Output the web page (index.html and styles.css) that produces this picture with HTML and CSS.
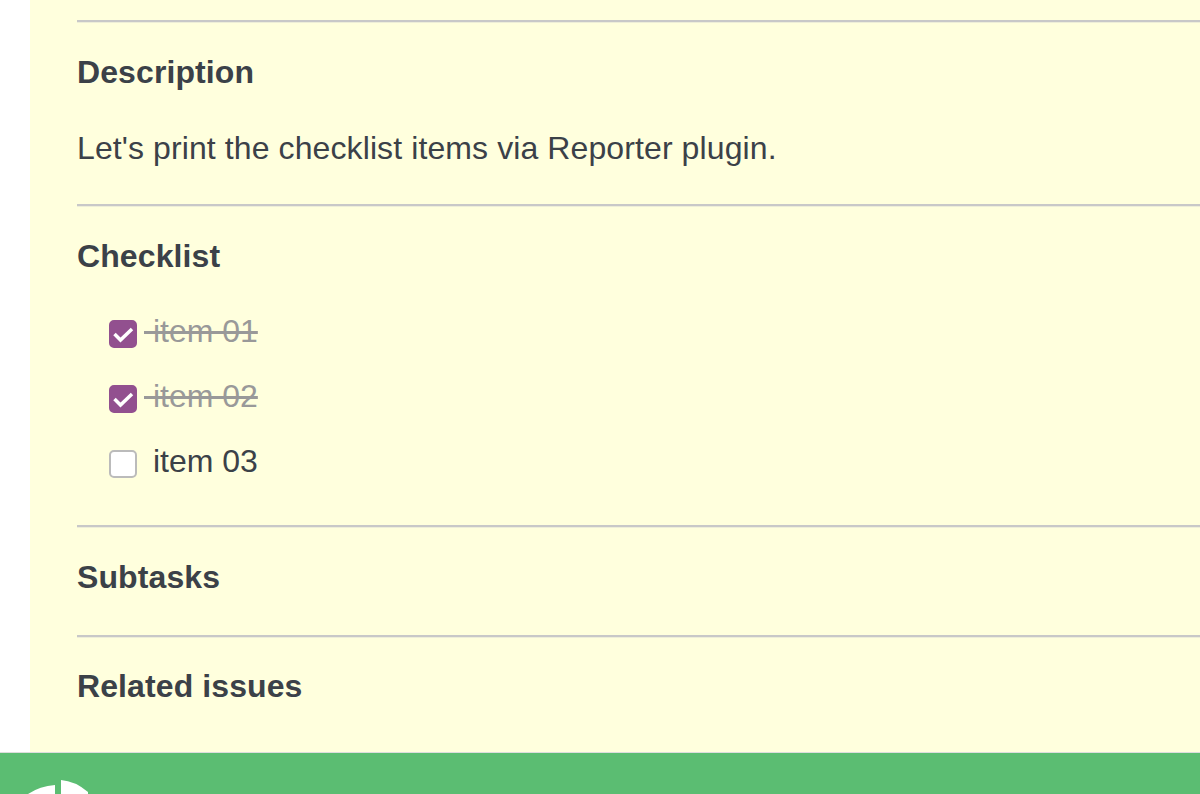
FILE: index.html
```html
<!DOCTYPE html>
<html>
  <head>
    <title>Issue</title>
    <link rel="stylesheet" href="styles.css">
  </head>

  <body>
    <div class="issue">
      <hr>
      <div class="section description">
        <h3>Description</h3>
        <p>Let's print the checklist items via Reporter plugin.</p>
      </div>
      <hr>
      <div class="section checklist-section">
        <h3>Checklist</h3>
        <ul class="checklist">
          <li class="done">
            <span class="box">
              <svg viewBox="0 0 28 28"><path d="M5.5 14l6 6 11.500-11"/></svg>
            </span>
            <span class="label"> item 01</span>
          </li>
          <li class="done">
            <span class="box">
              <svg viewBox="0 0 28 28"><path d="M5.5 14l6 6 11.500-11"/></svg>
            </span>
            <span class="label"> item 02</span>
          </li>
          <li>
            <span class="box"></span>
            <span class="label"> item 03</span>
          </li>
        </ul>
      </div>
      <hr>
      <div class="section subtasks">
        <h3>Subtasks</h3>
      </div>
      <hr class="thin">
      <div class="section relations">
        <h3>Related issues</h3>
      </div>
    </div>

    <div class="footer">
      <svg class="logo" viewBox="0 0 80 16">
        <path d="M8 16Q20 8 35 7V16Z"/>
        <path d="M41 2Q55 3 68 14V16H41Z"/>
      </svg>
    </div>
  </body>
</html>
```

FILE: styles.css
```css
* {
  margin: 0;
  padding: 0;
  box-sizing: border-box;
  font-family: "Liberation Sans", Arial, sans-serif;
}

html, body {
  height: 794px;
  overflow: hidden;
  background: #fff;
}

.issue {
  height: 752px;
  margin-left: 30px;
  padding: 20px 0 0 47px;
  background: #ffd;
  color: #3b4148;
  overflow: hidden;
}

hr {
  height: 2px;
  border: none;
  background: #c8c8c8;
  box-shadow: 0 1px 0 #eeeed8;
}

hr.thin {
  height: 1.5px;
}

h3 {
  font-size: 32px;
  line-height: 40px;
  font-weight: bold;
  letter-spacing: 0.1px;
}

.description {
  padding-top: 30px;
  height: 182px;
}

.description p {
  margin-top: 36px;
  font-size: 32px;
  line-height: 40px;
  letter-spacing: 0.1px;
}

.checklist-section {
  padding-top: 30px;
  height: 319px;
}

.checklist {
  list-style: none;
  margin-top: 23px;
  padding-left: 32px;
}

.checklist li {
  display: flex;
  align-items: center;
  height: 65px;
  font-size: 32px;
}

.box {
  width: 28px;
  height: 28px;
  margin-top: 4px;
  margin-right: 7px;
  background: #fff;
  border: 2px solid #bbb;
  border-radius: 5px;
}

.box svg {
  display: block;
  width: 28px;
  height: 28px;
  margin: -2px;
  fill: none;
  stroke: #fff;
  stroke-width: 3.5;
}

.label {
  white-space: pre;
}

.done .box {
  background: #92508f;
  border-color: #92508f;
}

.done .label {
  color: #999;
  text-decoration: line-through;
}

.subtasks {
  padding-top: 30px;
  height: 108px;
}

.relations {
  padding-top: 29px;
}

.footer {
  height: 42px;
  padding: 25px 0 0 20px;
  border-top: 1px solid #ddd;
  background: #5bbd72;
  overflow: hidden;
}

.logo {
  display: block;
  width: 80px;
  height: 16px;
  fill: #fff;
}
```
